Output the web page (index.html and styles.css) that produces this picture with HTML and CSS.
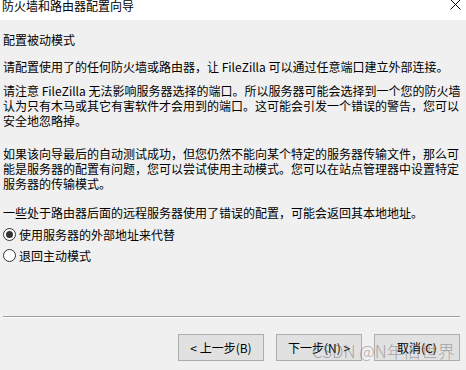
FILE: index.html
```html
<!DOCTYPE html>
<html>
<head>
	<title>防火墙和路由器配置向导</title>
	<meta charset="utf-8">
	<link rel="stylesheet" href="styles.css">
</head>
<body>
	<div class="janela">
		<div class="titulo">
			<span>防火墙和路由器配置向导</span>
			<svg class="fechar" width="11" height="11" viewBox="0 0 11 11">
				<path d="M0.5 0.5L10.5 10.5M10.5 0.5L0.5 10.5" stroke="#000" stroke-width="1"/>
			</svg>
		</div>
		<section class="conteudo">
			<h2>配置被动模式</h2>
			<p class="p1">请配置使用了的任何防火墙或路由器，让 FileZilla 可以通过任意端口建立外部连接。</p>
			<p class="p2">请注意 FileZilla 无法影响服务器选择的端口。所以服务器可能会选择到一个您的防火墙<br>认为只有木马或其它有害软件才会用到的端口。这可能会引发一个错误的警告，您可以<br>安全地忽略掉。</p>
			<p class="p3">如果该向导最后的自动测试成功，但您仍然不能向某个特定的服务器传输文件，那么可<br>能是服务器的配置有问题，您可以尝试使用主动模式。您可以在站点管理器中设置特定<br>服务器的传输模式。</p>
			<p class="p4">一些处于路由器后面的远程服务器使用了错误的配置，可能会返回其本地地址。</p>
			<label class="radio r1"><span class="bola marcada"></span>使用服务器的外部地址来代替</label>
			<label class="radio r2"><span class="bola"></span>退回主动模式</label>
		</section>
		<div id="rodape">
			<button>&lt; 上一步(B)</button>
			<button>下一步(N) &gt;</button>
			<button>取消(C)</button>
		</div>
		<div class="marca">CSDN @N年旧世界</div>
	</div>
</body>
</html>
```
FILE: styles.css
```css
*{
	margin: 0;
	padding: 0;
	box-sizing: border-box;
}
body{
	background: #f0f0f0;
	font-family: "Noto Sans CJK SC", "Microsoft YaHei", sans-serif;
	font-size: 12px;
	color: #000;
	overflow: hidden;
}
.janela{
	position: relative;
	height: 370px;
	display: flex;
	flex-direction: column;
}
.titulo{
	height: 20px;
	background: #fff;
	display: flex;
	justify-content: space-between;
	padding: 0 5px 0 2px;
	line-height: 11px;
}
.fechar{
	margin-top: -1px;
}
.conteudo{
	flex: 1;
	padding: 0 3px;
	line-height: 15px;
	white-space: nowrap;
}
h2{
	font-size: 12px;
	font-weight: normal;
	margin-top: 12px;
}
.p1{ margin-top: 12px; }
.p2{ margin-top: 9px; }
.p3{ margin-top: 18px; }
.p4{ margin-top: 14px; }
.radio{
	display: flex;
	align-items: center;
	gap: 3px;
}
.r1{ margin-top: 7px; }
.r2{ margin-top: 6px; }
.bola{
	width: 13px;
	height: 13px;
	border: 1px solid #333;
	border-radius: 50%;
	background: #fff;
	display: flex;
	align-items: center;
	justify-content: center;
}
.marcada::after{
	content: "";
	width: 7px;
	height: 7px;
	border-radius: 50%;
	background: #333;
}
#rodape{
	margin: 0 6px 0 3px;
	border-top: 1px solid #a0a0a0;
	box-shadow: inset 0 1px 0 #fff;
	padding: 17px 0 9px;
	display: flex;
	justify-content: flex-end;
	gap: 12px;
}
#rodape button{
	width: 86px;
	height: 27px;
	background: #e1e1e1;
	border: 1px solid #adadad;
	font-family: inherit;
	font-size: 12px;
	color: #000;
}
.marca{
	position: absolute;
	left: 312px;
	top: 338px;
	font-family: "Noto Sans CJK SC", sans-serif;
	font-size: 17px;
	font-weight: 300;
	color: rgba(110, 110, 110, 0.55);
	white-space: nowrap;
}
```
